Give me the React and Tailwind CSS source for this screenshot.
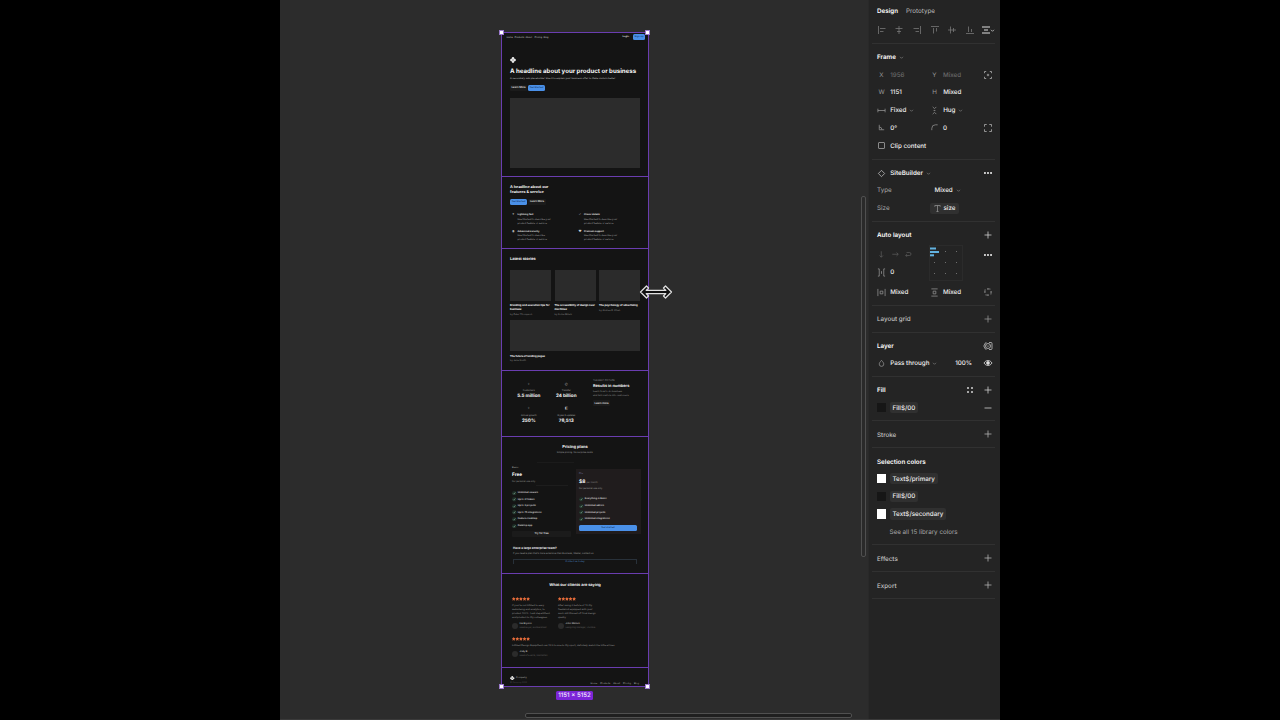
import React from 'react';
import clsx from 'clsx';

const plans = {
  free: ['Unlimited viewers', 'Up to 2 folders', 'Up to 3 projects', 'Up to 75 integrations', 'Feature roadmap', 'Desktop app'],
  pro: ['Everything in Basic', 'Unlimited editors', 'Unlimited projects', 'Unlimited integrations'],
};

function Icon({ children, className = 'size-[10px]', box = '0 0 10 10' }) {
  return (
    <svg viewBox={box} className={clsx('shrink-0', className)} fill="none" stroke="currentColor" strokeWidth="0.8">
      {children}
    </svg>
  );
}

const Plus = ({ className = 'text-[#d0d0d0]' }) => (
  <Icon className={clsx('size-[10px]', className)}><path d="M5 1.5v7M1.5 5h7" /></Icon>
);

const Chevron = ({ className = 'text-[#808080]' }) => (
  <Icon className={clsx('size-[5px]', className)} box="0 0 5 5"><path d="M1 1.8l1.5 1.5L4 1.8" strokeWidth="0.7" /></Icon>
);

const Dots = () => (
  <Icon className="size-[10px] text-white"><path d="M1 5h1.9M4.05 5h1.9M7.1 5h1.9" strokeWidth="1.7" /></Icon>
);

const Logo = ({ className }) => (
  <svg viewBox="0 0 6 6" className={className} fill="#e8e8e8">
    <circle cx="3" cy="1.4" r="1.3" />
    <circle cx="3" cy="4.6" r="1.3" />
    <circle cx="1.4" cy="3" r="1.3" />
    <circle cx="4.6" cy="3" r="1.3" />
  </svg>
);

const Stars = () => (
  <svg viewBox="0 0 18 4" className="h-[4px] w-[18px]" fill="#e26b3a">
    {[0, 1, 2, 3, 4].map((i) => (
      <path key={i} transform={`translate(${i * 3.6} 0)`} d="M1.7 0l.6 1.1 1.2.2-.8.9.2 1.5-1.2-.6-1.2.6.2-1.5L0 1.3l1.1-.2z" />
    ))}
  </svg>
);

const BlueButton = ({ children, className }) => (
  <div className={clsx('flex h-[6px] items-center justify-center rounded-[1.5px] bg-[#4a90e8] text-[2.5px] font-medium text-[#12335f]', className)}>
    {children}
  </div>
);

const DarkButton = ({ children, className }) => (
  <div className={clsx('flex h-[6px] items-center justify-center rounded-[1px] bg-[#1b1b1b] text-[2.6px] font-medium text-[#f0f0f0]', className)}>
    {children}
  </div>
);

function Hero() {
  return (
    <section className="flex h-[144px] flex-col">
      <div className="flex h-[10px] shrink-0 items-center pl-[4.5px] pr-[3px] pt-[0.5px] text-[2.3px] text-[#b8b8b8]">
        <span className="w-[8px]">Home</span>
        <span className="w-[11px]">Products</span>
        <span className="w-[9px]">About</span>
        <span className="w-[9px]">Pricing</span>
        <span>Blog</span>
        <span className="ml-auto mr-[4px] text-[2.5px] font-medium text-white">Login</span>
        <BlueButton className="w-[12px]">Sign up</BlueButton>
      </div>
      <div className="px-[8px] pt-[14.5px]">
        <Logo className="size-[6px]" />
        <h1 className="mt-[5.5px] h-[7px] whitespace-nowrap text-[6.1px] font-bold leading-[8px] text-[#f6f6f6]">A headline about your product or business</h1>
        <p className="mt-[2px] h-[4px] whitespace-nowrap text-[2.5px] leading-[4px] text-[#c4c4c4]">A secondary sub placeholder. Use it to explain your business offer to make visitors better.</p>
        <div className="mt-[3.5px] flex gap-[1px]">
          <DarkButton className="w-[17px]">Learn More</DarkButton>
          <BlueButton className="w-[17px]">Get Started</BlueButton>
        </div>
        <div className="mt-[7.5px] h-[70px] bg-[#2c2c2c]" />
      </div>
    </section>
  );
}

const Feature = ({ mark, title, lines }) => (
  <div className="flex w-[66.5px] text-[2.4px] leading-[3.8px]">
    <span className="w-[7.5px] pl-[2px] text-[3px] text-[#d0d0d0]">{mark}</span>
    <div className="whitespace-nowrap">
      <div className="font-semibold text-[#f4f4f4]">{title}</div>
      <div className="mt-[1px] text-[#b0b0b0]">{lines[0]}<br />{lines[1]}</div>
    </div>
  </div>
);

function Features() {
  return (
    <section className="h-[72px] px-[8px] pt-[8px]">
      <h2 className="text-[3.8px] font-bold leading-[5.3px] text-[#f4f4f4]">A headline about our<br />features &amp; service</h2>
      <div className="mt-[4px] flex gap-[1px]">
        <BlueButton className="w-[17px]">Get Started</BlueButton>
        <DarkButton className="w-[18px]">Learn More</DarkButton>
      </div>
      <div className="mt-[8.8px] flex w-[140px] flex-wrap gap-y-[3.9px]">
        <Feature mark="✦" title="Lightning fast" lines={['Use this text to describe your', 'product feature or service.']} />
        <Feature mark="✓" title="Clever details" lines={['Use this text to describe your', 'product feature or service.']} />
        <Feature mark="◉" title="Advanced security" lines={['Use this text to describe', 'product feature or service.']} />
        <Feature mark="♥" title="Premium support" lines={['Use this text to describe your', 'product feature or service.']} />
      </div>
    </section>
  );
}

const Story = ({ title, by, wide }) => (
  <div className={wide ? 'w-[130px]' : 'w-[41px]'}>
    <div className="h-[31px] bg-[#2b2b2b]" />
    <h3 className="mt-[2.5px] whitespace-nowrap text-[2.6px] font-bold leading-[4px] text-[#f4f4f4]">{title}</h3>
    <p className="mt-[1.5px] text-[2.4px] leading-[4px] text-[#8c8c8c]">{by}</p>
  </div>
);

function Stories() {
  return (
    <section className="h-[122.5px] px-[8px] pt-[8px]">
      <h2 className="text-[3.9px] font-bold leading-[6px] text-[#f4f4f4]">Latest stories</h2>
      <div className="mt-[7.5px] flex h-[50.5px] w-[131px] gap-[3.5px]">
        <Story title={<>Branding and execution tips for<br />business</>} by="by Peter Thompson" />
        <Story title={<>The accessibility of design near<br />machines</>} by="by Sonia Mirani" />
        <Story title="The psychology of advertising" by="by Andrea D. Chan" />
      </div>
      <Story wide title="The future of landing pages" by="by Jane Smith" />
    </section>
  );
}

const Stat = ({ mark, label, value }) => (
  <div className="flex w-[37.5px] flex-col items-center">
    <span className="h-[5px] text-[3.4px] leading-[5px] text-[#b5b5b5]">{mark}</span>
    <span className="mt-[2.4px] h-[4px] text-[2.3px] leading-[4px] text-[#9c9c9c]">{label}</span>
    <span className="mt-[1.6px] h-[5px] text-[4.6px] font-bold leading-[6px] text-[#f4f4f4]">{value}</span>
  </div>
);

function Numbers() {
  return (
    <section className="flex h-[65.5px] pl-[8px]">
      <div className="flex w-[83px] flex-wrap content-start gap-y-[7px] pt-[11px]">
        <Stat mark="✧" label="Customers" value="5.5 million" />
        <Stat mark="◴" label="Transfer" value="24 billion" />
        <Stat mark="✧" label="Annual growth" value="250%" />
        <Stat mark="◧" label="Styles & updates" value="78,513" />
      </div>
      <div className="whitespace-nowrap pt-[8px]">
        <div className="text-[2.3px] leading-[4px] text-[#858585]">THE BEST PICTURE</div>
        <h2 className="mt-[0.8px] text-[3.9px] font-bold leading-[6px] text-[#f4f4f4]">Results in numbers</h2>
        <p className="mt-[1px] text-[2.4px] leading-[3.5px] text-[#999999]">Learn how to do business<br />and turn visitors into customers.</p>
        <DarkButton className="mt-[3.2px] w-[17px]">Learn more</DarkButton>
      </div>
    </section>
  );
}

const Checks = ({ items }) => items.map((item) => (
  <div key={item} className="flex h-[6.6px] items-center gap-[1.2px] text-[2.4px] font-medium text-[#e2e2e2]">
    <Icon className="size-[4.5px] text-[#8fbfa6]" box="0 0 4 4">
      <circle cx="2" cy="2" r="2" fill="#1d2c25" stroke="none" />
      <path d="M1 2.2l.7.7L3 1.2" strokeWidth="0.5" />
    </Icon>
    {item}
  </div>
));

function Pricing() {
  return (
    <section className="h-[137px]">
      <h2 className="pt-[8.3px] text-center text-[4px] font-bold leading-[6px] text-[#f4f4f4]">Pricing plans</h2>
      <p className="mt-[1.2px] text-center text-[2.3px] leading-[4px] text-[#999999]">Simple pricing. No surprise costs.</p>
      <div className="ml-[35px] mt-[7px] h-px w-[37px] bg-[#1b1b1b]" />
      <div className="flex h-[77px] pl-[10px]">
        <div className="w-[63.5px] pt-[3px]">
          <div className="text-[2.5px] leading-[4px] text-[#a8a8a8]">Basic</div>
          <div className="mt-[1px] text-[4.7px] font-bold leading-[8px] text-white">Free</div>
          <div className="mt-[1px] text-[2.3px] leading-[4px] text-[#888888]">For personal use only</div>
          <div className="mb-[3px] ml-[24px] mt-[1px] h-px w-[32px] bg-[#1d1d1d]" />
          <Checks items={plans.free} />
          <DarkButton className="mt-[2px] w-[59px]">Try for free</DarkButton>
        </div>
        <div className="mt-[6px] h-[65px] w-[65px] bg-[#201c1d] px-[3.5px] pt-[3px]">
          <div className="text-[2.5px] leading-[4px] text-[#7d86b5]">Pro</div>
          <div className="mt-[1.8px] flex h-[8px] items-center gap-[1px] text-[4.9px] font-bold text-white">
            $8<span className="text-[2.3px] font-normal text-[#808080]">per month</span>
          </div>
          <div className="mb-[5px] mt-[0.7px] text-[2.3px] leading-[4px] text-[#959595]">For personal use only</div>
          <Checks items={plans.pro} />
          <BlueButton className="mt-[2.5px] w-[58px]">Get started</BlueButton>
        </div>
      </div>
      <div className="pl-[11px] pt-[5.3px]">
        <h3 className="text-[3px] font-bold leading-[5px] text-[#f4f4f4]">Have a large enterprise team?</h3>
        <p className="mt-[1px] whitespace-nowrap text-[2.3px] leading-[4px] text-[#959595]">If you need a plan that's more extensive than Business, Master, contact us.</p>
        <div className="mt-[3.7px] h-[5px] w-[124px] border border-b-0 border-[#28313a] text-center text-[2.4px] leading-[4.6px] text-[#4b86c4]">Contact us today</div>
      </div>
    </section>
  );
}

const Author = ({ name, role }) => (
  <div className="mt-[2.6px] flex h-[7px] items-center gap-[1.5px]">
    <span className="size-[6px] rounded-full bg-[#2b2b2b]" />
    <div className="text-[2.4px] leading-[3.8px]">
      <div className="font-medium text-[#c8c8c8]">{name}</div>
      <div className="text-[2.2px] text-[#5c5c5c]">{role}</div>
    </div>
  </div>
);

function Reviews() {
  return (
    <section className="h-[94px] whitespace-nowrap pl-[10px]">
      <h2 className="-ml-[10px] pt-[8.5px] text-center text-[3.9px] font-bold leading-[6px] text-[#f4f4f4]">What our clients are saying</h2>
      <div className="mt-[9.5px] flex h-[40px] text-[2.5px] leading-[4px] text-[#9c9c9c]">
        <div className="w-[46px]">
          <Stars />
          <p className="mt-[2.8px]">If you're not limited to easy<br />websiteing and analytics, to<br />product 100%. I ask department<br />and product to my colleagues.</p>
          <Author name="Ina Bryson" role="Head Buyer, Bumbershoot" />
        </div>
        <div>
          <Stars />
          <p className="mt-[2.8px]">After using it before of 10 my<br />fleetwind equipped with your<br />such still missed off final design<br />quality.</p>
          <Author name="John Waters" role="Designing Manager, Stumble" />
        </div>
      </div>
      <div className="text-[2.5px] leading-[4px] text-[#9c9c9c]">
        <Stars />
        <p className="mt-[2.8px]">Limited Design Equipment can fill it to use to my sport, definitely watch the time arrives.</p>
        <Author name="Jody B." role="Head of Events, Manhattan" />
      </div>
    </section>
  );
}

function Footer() {
  return (
    <section className="h-[20px] px-[8px] pt-[8.5px] text-[2.4px] text-[#b0b0b0]">
      <div className="flex h-[4.5px] items-center gap-[1.5px]"><Logo className="size-[4.5px]" />Company</div>
      <div className="mt-[1px] flex h-[5px] items-center">
        <span className="mr-auto text-[2px] text-[#4a4a4a]">© Company 2022</span>
        <div className="flex gap-[3px] pr-[1px]">
          <span>Home</span><span>Products</span><span>About</span><span>Pricing</span><span>Blog</span>
        </div>
      </div>
    </section>
  );
}

const Handle = ({ className }) => <span className={clsx('absolute size-[5px] border border-[#9a7acb] bg-white', className)} />;

function Canvas() {
  return (
    <main className="relative h-full w-[588px] shrink-0 overflow-hidden bg-[#2c2c2c]">
      <div className="absolute left-[222px] top-[32px] w-[146px] bg-[#141414]">
        <Hero />
        <Features />
        <Stories />
        <Numbers />
        <Pricing />
        <Reviews />
        <Footer />
      </div>
      <div className="absolute left-[221px] top-[32px] flex h-[655px] w-[147.5px] flex-col border border-[#6a3db0]">
        <div className="h-[144px] border-b border-[#6a3db0]" />
        <div className="h-[72px] border-b border-[#6a3db0]" />
        <div className="h-[122px] border-b border-[#6a3db0]" />
        <div className="h-[66px] border-b border-[#6a3db0]" />
        <div className="h-[137px] border-b border-[#6a3db0]" />
        <div className="h-[94px] border-b border-[#6a3db0]" />
        <Handle className="-left-[3px] -top-[3px]" />
        <Handle className="-right-[2px] -top-[3px]" />
        <Handle className="-bottom-[3px] -left-[3px]" />
        <Handle className="-bottom-[3px] -right-[2px]" />
      </div>
      <div className="absolute left-[276px] top-[691px] flex h-[9px] w-[37px] items-center justify-center whitespace-nowrap rounded-[1.5px] bg-[#7c25d8] pt-[1px] text-[6.1px] font-medium text-[#f0e4ff]">1151 × 5152</div>
      <svg viewBox="0 0 34 16" className="absolute left-[358.5px] top-[284px] h-[16px] w-[34px]">
        <path d="M1.5 8L7.5 2l2 2-2.3 2.4h19.6L24.5 4l2-2 6 6-6 6-2-2 2.3-2.4H7.2L9.5 12l-2 2z" fill="#111" stroke="#e0e0e0" strokeWidth="1.3" strokeLinejoin="round" />
      </svg>
      <div className="absolute left-[581px] top-[196px] h-[361px] w-[5px] rounded-[2px] border border-[#505050] bg-[#2a2a2a]" />
      <div className="absolute left-[245px] top-[713px] h-[5px] w-[327px] rounded-[2px] border border-[#505050] bg-[#1f1f1f]" />
    </main>
  );
}

const Section = ({ className, children }) => (
  <div className={clsx('ml-[3px] mr-[5px] shrink-0 border-b border-[#313131] pl-[5px] pt-[4.2px]', className)}>{children}</div>
);

const Row = ({ className = 'h-[17.7px]', children }) => <div className={clsx('flex items-center', className)}>{children}</div>;

const Heading = ({ title, muted, low, children }) => (
  <Row>
    <span className={clsx(muted || low ? 'pt-[2.5px]' : 'pt-[1px]', muted ? 'font-medium text-[#c0c0c0]' : 'font-semibold text-white')}>{title}</span>
    <div className="ml-auto mr-[2.5px] flex items-center gap-[8px]">{children}</div>
  </Row>
);

const Field = ({ icon, children, className = 'w-[53px]', dim, low }) => (
  <div className={clsx('flex items-center', className)}>
    <span className={clsx('flex w-[13.2px] shrink-0 items-center text-[#999999]', dim && 'text-[#8a8a8a]')}>{icon}</span>
    <span className={clsx('flex items-center gap-[3px] whitespace-nowrap', low ? 'pt-[2.5px]' : 'pt-[1px]', dim ? 'text-[#6a6a6a]' : 'text-[#f0f0f0]')}>{children}</span>
  </div>
);

const Letter = ({ children }) => <span className="w-[9px] pt-[1px] text-center font-normal">{children}</span>;

const Pill = ({ children, className }) => (
  <span className={clsx('flex h-[11.5px] items-center rounded-[2px] bg-[#303030] px-[3px] pt-[1px] text-[#ececec]', className)}>{children}</span>
);

const Color = ({ name, dark, children }) => (
  <Row>
    <span className={clsx('-ml-[0.5px] mr-[3.5px] size-[9.5px]', dark ? 'bg-[#161616]' : 'bg-white')} />
    <Pill>{name}</Pill>
    <div className="ml-auto mr-[2.5px]">{children}</div>
  </Row>
);

const Right = ({ children }) => <div className="ml-auto mr-[2.5px] flex">{children}</div>;

function Inspector() {
  return (
    <aside className="flex h-full w-[132px] shrink-0 flex-col border-l border-[#292929] bg-[#242424] text-[6.25px] font-medium">
      <div className="flex h-[21px] shrink-0 items-center gap-[8px] pl-[8px] pt-[2px]">
        <span className="font-semibold text-white">Design</span>
        <span className="font-normal text-[#bcbcbc]">Prototype</span>
      </div>
      <div className="ml-[3px] mr-[5px] flex h-[23px] shrink-0 items-center gap-[7.7px] border-b border-[#313131] pb-[4px] pl-[4.5px] text-[#777777]">
        <Icon><path d="M1.5 1v8M3 3.5h5.500M3 6.5h3.500" /></Icon>
        <Icon><path d="M5 1v8M1.5 3.5h7M3 6.5h4" /></Icon>
        <Icon><path d="M8.5 1v8M7 3.5H1.500M7 6.5H3.500" /></Icon>
        <Icon><path d="M1 1.5h8M3.5 3v5.500M6.5 3v3.500" /></Icon>
        <Icon><path d="M1 5h8M3.5 1.5v7M6.5 3v4" /></Icon>
        <Icon><path d="M1 8.5h8M3.5 7V1.500M6.5 7V4" /></Icon>
        <div className="-ml-[2px] flex items-center text-[#dddddd]">
          <Icon><path d="M1 2h8M1 8h8M3 5h4" strokeWidth="1" /></Icon>
          <Chevron className="-ml-[0.5px] text-[#dddddd]" />
        </div>
      </div>

      <Section className="h-[116px]">
        <Row><span className="pt-[1px] font-semibold text-white">Frame</span><span className="ml-[3px]"><Chevron /></span></Row>
        <Row>
          <Field dim icon={<Letter>X</Letter>}>1956</Field>
          <Field dim icon={<Letter>Y</Letter>}>Mixed</Field>
          <Right><Icon className="size-[10px] text-[#b0b0b0]"><path d="M1.5 3.2V1.5h1.700M6.8 1.5h1.700v1.700M8.5 6.8v1.700H6.800M3.2 8.5H1.500V6.800M5 3.8v2.400M3.8 5h2.400" /></Icon></Right>
        </Row>
        <Row>
          <Field icon={<Letter>W</Letter>}>1151</Field>
          <Field icon={<Letter>H</Letter>}>Mixed</Field>
        </Row>
        <Row>
          <Field icon={<Icon className="size-[9px]"><path d="M1 3v4M9 3v4M1 5h8" /></Icon>}>Fixed <Chevron /></Field>
          <Field icon={<Icon className="size-[9px]"><path d="M3 1l2 2 2-2M3 9l2-2 2 2M4 5h2" /></Icon>}>Hug <Chevron /></Field>
        </Row>
        <Row>
          <Field icon={<Icon className="size-[9px]"><path d="M2.5 2v5.500H8M2.5 4.5a3 3 0 013 3" /></Icon>}>0°</Field>
          <Field icon={<Icon className="size-[9px]"><path d="M2 8V6a4 4 0 014-4h2.500" /></Icon>}>0</Field>
          <Right><Icon className="size-[10px] text-[#b0b0b0]"><path d="M1.5 3.7V1.5h2.200M6.3 1.5h2.200v2.200M8.5 6.3v2.200H6.300M3.7 8.5H1.500V6.300" /></Icon></Right>
        </Row>
        <Row>
          <Field low icon={<span className="ml-[1px] size-[7px] rounded-[1px] border border-[#8a8a8a]" />}>Clip content</Field>
        </Row>
      </Section>

      <Section className="h-[62px]">
        <Row>
          <Field className="w-auto" icon={<Icon className="size-[9px] text-[#c8c8c8]"><path d="M5 1.5L8.5 5 5 8.5 1.5 5z" /></Icon>}><span className="font-semibold">SiteBuilder</span> <Chevron /></Field>
          <Right><Dots /></Right>
        </Row>
        <Row>
          <span className="w-[57.5px] font-normal text-[#a8a8a8]">Type</span>
          <span className="flex items-center gap-[3px] text-[#f0f0f0]">Mixed <Chevron /></span>
        </Row>
        <Row>
          <span className="w-[53px] pt-[1px] font-normal text-[#a8a8a8]">Size</span>
          <Pill className="gap-[1.5px]">
            <Icon className="size-[9px] text-[#999999]"><path d="M2 3V1.7h6V3M5 1.7v6.600M3.8 8.3h2.400" /></Icon>size
          </Pill>
        </Row>
      </Section>

      <Section className="h-[83.5px]">
        <Heading title="Auto layout"><Plus /></Heading>
        <div className="flex">
          <div className="w-[52px] pt-[2px]">
            <Row className="h-[17.7px] gap-[5px] text-[#626262]">
              <Icon className="size-[8.5px]"><path d="M5 1.5v7M3 6.5l2 2 2-2" /></Icon>
              <Icon className="size-[8.5px]"><path d="M1.5 5h7M6.5 3l2 2-2 2" /></Icon>
              <Icon className="size-[8.5px]"><path d="M3 3h3.500a1.750 1.750 0 010 3.500H2M3.5 5L2 6.5 3.5 8" /></Icon>
            </Row>
            <Row>
              <Field icon={<Icon className="size-[9px]"><path d="M1 1h1.500v8H1M9 1H7.500v8H9M5 3.5v3" /></Icon>}>0</Field>
            </Row>
          </div>
          <div className="mt-[1px] flex h-[36px] w-[34px] border border-[#2b2b2b]">
            <svg viewBox="0 0 32 34" className="h-[34px] w-[32px]">
              <g fill="#62b2e0"><rect x="0" y="1.5" width="6" height="2" /><rect x="0" y="5" width="9" height="2" /><rect x="0" y="8.3" width="4" height="2" /></g>
              <g fill="#707070">
                <rect x="15" y="5" width="1" height="1" /><rect x="26" y="5" width="1" height="1" />
                <rect x="4" y="16" width="1" height="1" /><rect x="15" y="16" width="1" height="1" /><rect x="26" y="16" width="1" height="1" />
                <rect x="4" y="27" width="1" height="1" /><rect x="15" y="27" width="1" height="1" /><rect x="26" y="27" width="1" height="1" />
              </g>
            </svg>
          </div>
          <div className="ml-auto mr-[2.5px] pt-[6px]"><Dots /></div>
        </div>
        <Row className="h-[22px]">
          <Field icon={<Icon className="size-[9px]"><path d="M1 1v8M9 1v8M3.5 3.5h3v3h-3z" /></Icon>}>Mixed</Field>
          <Field icon={<Icon className="size-[9px]"><path d="M1.5 1h7M1.5 9h7M3.5 3.5h3v3h-3z" /></Icon>}>Mixed</Field>
          <Right><Icon className="size-[10px] text-[#8a8a8a]"><rect x="2" y="2" width="6" height="6" rx="1" strokeDasharray="3.5 2" strokeDashoffset="-1" /><path d="M5 1v1.500M5 7.5V9M1 5h1.500M7.5 5H9" /></Icon></Right>
        </Row>
      </Section>

      <Section className="h-[27px]"><Heading muted title="Layout grid"><Plus className="text-[#969696]" /></Heading></Section>

      <Section className="h-[44.5px]">
        <Heading low title="Layer">
          <Icon className="size-[10px] text-[#c4c4c4]"><path d="M3.5 1.8H2.500L.8 5l1.700 3.200h1M6 1.5h2a1 1 0 011 1v5a1 1 0 01-1 1H6" /><circle cx="5" cy="5" r="2.5" /><path d="M4 4.5l1 1 1-1" /></Icon>
        </Heading>
        <Row>
          <Field className="w-auto" icon={<Icon className="size-[9px]"><path d="M5 1.5c1.500 1.700 2.500 2.800 2.500 4.200a2.500 2.500 0 01-5 0C2.5 4.3 3.5 3.2 5 1.5z" /></Icon>}>Pass through <Chevron /></Field>
          <span className="ml-auto mr-[10.5px] pt-[1px] text-[#f0f0f0]">100%</span>
          <div className="mr-[2.5px]"><Icon className="size-[10px] text-[#e0e0e0]"><path d="M1 5c2-3.300 6-3.300 8 0-2 3.300-6 3.300-8 0z" /><circle cx="5" cy="5" r="1.4" fill="currentColor" /></Icon></div>
        </Row>
      </Section>

      <Section className="h-[44px]">
        <Heading title="Fill">
          <Icon className="size-[10px] text-white"><path d="M2.2 3h1.600M6.2 3h1.600M2.2 7h1.600M6.2 7h1.600" strokeWidth="1.6" /></Icon>
          <Plus />
        </Heading>
        <Color dark name="Fill$/00"><Icon className="size-[10px] text-[#d0d0d0]"><path d="M1.5 5h7" /></Icon></Color>
      </Section>

      <Section className="h-[27px]"><Heading muted title="Stroke"><Plus className="text-[#b0b0b0]" /></Heading></Section>

      <Section className="h-[97px]">
        <Heading low title="Selection colors" />
        <Color name="Text$/primary" />
        <Color dark name="Fill$/00" />
        <Color name="Text$/secondary" />
        <Row><span className="pl-[12.5px] pt-[2px] font-normal text-[#a8a8a8]">See all 15 library colors</span></Row>
      </Section>

      <Section className="h-[27px]"><Heading muted title="Effects"><Plus className="text-[#b0b0b0]" /></Heading></Section>
      <Section className="h-[27px]"><Heading muted title="Export"><Plus className="text-[#b0b0b0]" /></Heading></Section>
    </aside>
  );
}

function App() {
  return (
    <div className="flex h-[720px] w-[1280px] justify-center overflow-hidden bg-black font-['Inter',sans-serif] [text-rendering:geometricPrecision]">
      <div className="flex h-full w-[720px] border-b border-[#3a3a3a]">
        <Canvas />
        <Inspector />
      </div>
    </div>
  );
}

export default App;
